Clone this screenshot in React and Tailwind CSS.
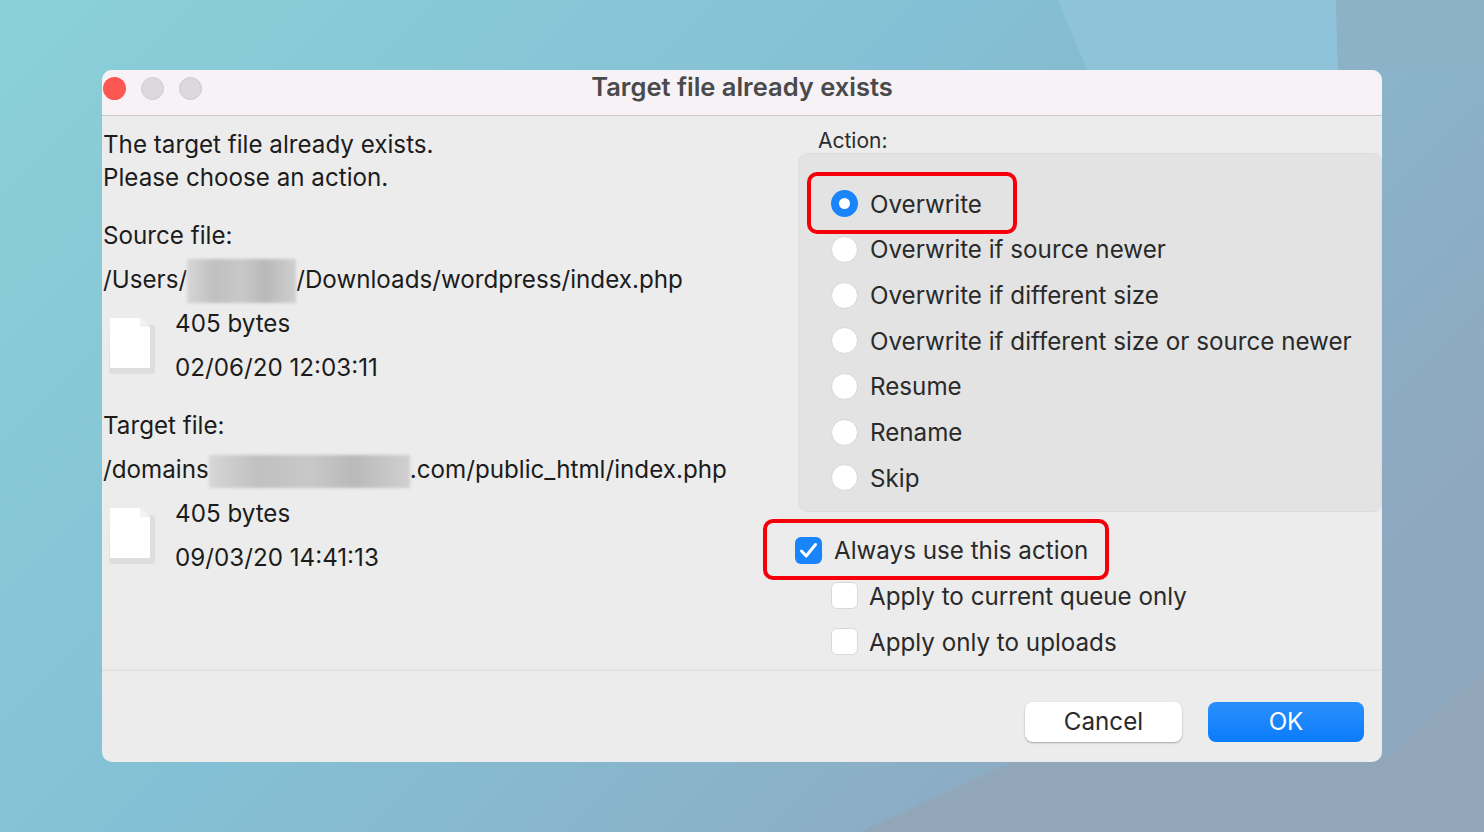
const font = { fontFamily: 'Inter, "Liberation Sans", sans-serif' };

function Blur({ w, h }) {
  return <span className={`inline-block align-middle bg-[linear-gradient(90deg,#d6d6d6,#c0c0c0_25%,#c8c8c8_50%,#b9b9b9_72%,#d0d0d0)] blur-[1.5px] ${w} ${h}`} />;
}

function FileIcon() {
  return (
    <svg width="47" height="58" viewBox="0 0 47 58" className="shrink-0">
      <path d="M1 8 H43 Q46 8 46 11 V54 Q46 57 43 57 H3 Q0 57 0 54 Z" fill="#dedede" />
      <path d="M1 2 Q1 1 2 1 H31 L41 10 V50 Q41 51 40 51 H2 Q1 51 1 50 Z" fill="#ffffff" />
      <path d="M31 1 L41 10 H33 Q31 10 31 8 Z" fill="#f2f2f2" />
    </svg>
  );
}

function FileRow({ date }) {
  return (
    <div className="flex h-[88px]">
      <div className="w-[72px] pl-[6px] pt-[15px]"><FileIcon /></div>
      <div className="flex flex-col">
        <div className="h-[44px] leading-[44px]">405 bytes</div>
        <div className="h-[44px] leading-[44px]">{date}</div>
      </div>
    </div>
  );
}

function Radio({ label, checked }) {
  return (
    <div className="flex items-center h-[45.67px]">
      {checked ? (
        <span className="w-[27px] h-[27px] rounded-full bg-[#1a84fb] flex items-center justify-center shrink-0">
          <span className="w-[11px] h-[11px] rounded-full bg-white" />
        </span>
      ) : (
        <span className="w-[27px] h-[27px] rounded-full bg-white border border-[#d6d6d6] shrink-0" />
      )}
      <span className="ml-[12px] pt-[2px] text-[#2a2a2a] whitespace-nowrap">{label}</span>
    </div>
  );
}

function Check({ label }) {
  return (
    <div className="flex items-center h-[45.5px] pl-[33px]">
      <span className="w-[27px] h-[27px] rounded-[6px] bg-white border border-[#d8d8d8] shrink-0" />
      <span className="ml-[11px] pt-[3px] text-[#2a2a2a] whitespace-nowrap">{label}</span>
    </div>
  );
}

export default function App() {
  return (
    <div className="relative w-[1484px] h-[832px] overflow-hidden pt-[70px] pl-[102px]" style={font}>
      <svg className="absolute inset-0" width="1484" height="832" viewBox="0 0 1484 832">
        <defs>
          <linearGradient id="bg" x1="0" y1="0" x2="1" y2="0.55">
            <stop offset="0" stopColor="#8bd0d8" />
            <stop offset="0.5" stopColor="#84c0d5" />
            <stop offset="1" stopColor="#8ea8c0" />
          </linearGradient>
        </defs>
        <rect width="1484" height="832" fill="url(#bg)" />
        <path d="M1058 0 H1336 L1338 70 H1087 Z" fill="#8ec3d9" />
        <path d="M1336 0 H1484 V70 H1338 Z" fill="#8cb2c8" />
        <path d="M860 832 L1013 762 H1382 L1484 670 V832 Z" fill="#91a6b8" />
      </svg>

      <div className="relative w-[1280px] h-[692px] rounded-[10px] overflow-hidden bg-[#ececec] text-[24.2px] text-[#1c1c1c] flex flex-col">
        <div className="relative h-[46px] shrink-0 bg-[#f6f2f6] border-b border-[#c8c6c8] flex items-center pb-[8px]">
          <div className="flex items-center gap-[15px] pl-[1px]">
            <span className="w-[23px] h-[23px] rounded-full bg-[#fc5753]" />
            <span className="w-[23px] h-[23px] rounded-full bg-[#dcd8dc] border border-[#cdc9cd]" />
            <span className="w-[23px] h-[23px] rounded-full bg-[#dcd8dc] border border-[#cdc9cd]" />
          </div>
          <div className="absolute inset-x-0 top-0 h-[34px] leading-[34px] text-center font-semibold text-[25.5px] text-[#4a4a4a]">
            Target file already exists
          </div>
        </div>

        <div className="flex h-[555px] shrink-0 border-b-2 border-[#e3e3e3]">
          <div className="w-[696px] shrink-0 pl-[1px] pt-[12px]">
            <div className="h-[33px] leading-[33px]">The target file already exists.</div>
            <div className="h-[33px] leading-[33px]">Please choose an action.</div>
            <div className="h-[44px] leading-[44px] mt-[20px]">Source file:</div>
            <div className="h-[44px] leading-[44px] whitespace-nowrap">/Users/<Blur w="w-[109px]" h="h-[44px]" />/Downloads/wordpress/index.php</div>
            <FileRow date="02/06/20 12:03:11" />
            <div className="h-[44px] leading-[44px] mt-[14px]">Target file:</div>
            <div className="h-[44px] leading-[44px] whitespace-nowrap">/domains<Blur w="w-[201px]" h="h-[33px]" />.com/public_html/index.php</div>
            <FileRow date="09/03/20 14:41:13" />
          </div>

          <div className="flex-1 min-w-0 flex flex-col">
            <div className="h-[37px] pt-[12px] pl-[20px] text-[21px] leading-[25px] text-[#2c2c2c]">Action:</div>
            <div className="h-[359px] rounded-l-[10px] rounded-r-[8px] bg-[#e3e3e3] border border-[#dcdcdc] pl-[32px] pt-[27px]">
              <Radio label="Overwrite" checked />
              <Radio label="Overwrite if source newer" />
              <Radio label="Overwrite if different size" />
              <Radio label="Overwrite if different size or source newer" />
              <Radio label="Resume" />
              <Radio label="Rename" />
              <Radio label="Skip" />
            </div>
            <div className="pt-[15px]">
              <div className="flex items-center h-[46px] ml-[-3px]">
                <span className="w-[27px] h-[27px] rounded-[6px] bg-[#1a84fb] flex items-center justify-center shrink-0">
                  <svg width="19" height="17" viewBox="0 0 19 17" fill="none">
                    <path d="M2.5 9 L7.2 14 L16.5 2.5" stroke="#fff" strokeWidth="3" strokeLinecap="round" strokeLinejoin="round" />
                  </svg>
                </span>
                <span className="ml-[12px] pt-[2px] text-[#2a2a2a] whitespace-nowrap">Always use this action</span>
              </div>
              <Check label="Apply to current queue only" />
              <Check label="Apply only to uploads" />
            </div>
          </div>
        </div>

        <div className="flex-1 flex justify-end gap-[26px] pr-[18px] pt-[31px]">
          <button className="w-[157px] h-[40px] rounded-[8px] bg-white shadow-[0_1px_2px_rgba(0,0,0,0.3)] text-[#2a2a2a]">Cancel</button>
          <button className="w-[156px] h-[40px] rounded-[8px] bg-[linear-gradient(#2a8ffc,#0b7cfb)] text-white">OK</button>
        </div>

        <div className="absolute left-[705px] top-[102px] w-[210px] h-[62px] rounded-[10px] border-4 border-[#f5000a]" />
        <div className="absolute left-[661px] top-[449px] w-[346px] h-[61px] rounded-[10px] border-4 border-[#f5000a]" />
      </div>
    </div>
  );
}
